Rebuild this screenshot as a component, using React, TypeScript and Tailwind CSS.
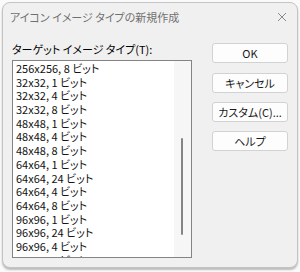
import React from "react";

const items = [
  "256x256, 8 ビット",
  "32x32, 1 ビット",
  "32x32, 4 ビット",
  "32x32, 8 ビット",
  "48x48, 1 ビット",
  "48x48, 4 ビット",
  "48x48, 8 ビット",
  "64x64, 1 ビット",
  "64x64, 24 ビット",
  "64x64, 4 ビット",
  "64x64, 8 ビット",
  "96x96, 1 ビット",
  "96x96, 24 ビット",
  "96x96, 4 ビット",
  "96x96, 8 ビット",
];

const font = "font-['Segoe_UI','Noto_Sans_CJK_JP',sans-serif] [font-feature-settings:'palt']";

function Btn({ label, className }: { label: string; className?: string }) {
  return (
    <div
      className={`h-[20px] w-[76px] rounded-[3px] border border-[#d2d2d2] bg-[#fdfdfd] flex items-center justify-center text-[11px] text-[#1a1a1a] ${className ?? ""}`}
    >
      {label}
    </div>
  );
}

export default function App() {
  return (
    <div className={`w-[300px] h-[272px] bg-[#fafafa] pt-[2px] px-[2px] ${font}`}>
      <div className="w-[296px] h-[266px] rounded-[8px] border border-[#c4c4c4] bg-[#f0f0f0] shadow-[0_2px_2px_rgba(0,0,0,0.25)] overflow-hidden flex flex-col">
        <div className="h-[28px] flex items-center pl-[7px] pr-[6px] text-[11px] text-[#707070]">
          <span>アイコン イメージ タイプの新規作成</span>
          <svg className="ml-auto mr-[4px]" width="10" height="10" viewBox="0 0 10 10">
            <path d="M1 1 L9 9 M9 1 L1 9" stroke="#8a8a8a" strokeWidth="1" />
          </svg>
        </div>
        <div className="flex pt-[11px] pl-[9px] pr-[9px]">
          <div className="flex flex-col">
            <div className="h-[14px] leading-[14px] text-[11px] text-black">ターゲット イメージ タイプ(T):</div>
            <div className="mt-[4px] w-[180px] h-[198px] border border-[#848484] bg-white flex overflow-hidden">
              <div className="flex-1 pt-[1px] pl-[3px] overflow-hidden">
                {items.map((t) => (
                  <div key={t} className="h-[13.7px] leading-[13.7px] text-[11px] text-[#111] whitespace-nowrap">
                    {t}
                  </div>
                ))}
              </div>
              <div className="w-[17px] h-full bg-[#f6f6f6] relative">
                <div className="absolute left-[7px] top-[77px] w-[2px] h-[97px] rounded-full bg-[#858585]" />
              </div>
            </div>
          </div>
          <div className="ml-auto flex flex-col pt-[1px]">
            <Btn label="OK" />
            <Btn label="キャンセル" className="mt-[10px]" />
            <Btn label="カスタム(C)..." className="mt-[9px]" />
            <Btn label="ヘルプ" className="mt-[9px]" />
          </div>
        </div>
      </div>
    </div>
  );
}
